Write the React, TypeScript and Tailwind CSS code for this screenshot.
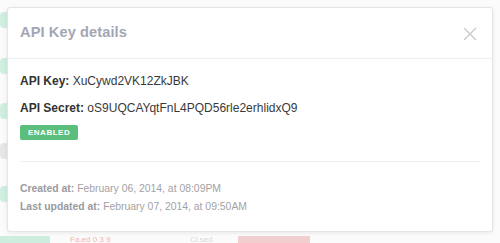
import React from "react";

export default function App() {
  const font = { fontFamily: '"Helvetica Neue", "Liberation Sans", Arial, sans-serif' };
  return (
    <div className="relative w-[500px] h-[243px] overflow-hidden bg-[#fbfbfc]" style={font}>
      {/* faded background page */}
      <div className="flex flex-col pt-[12px] gap-0">
        <div className="h-[16px] w-[30px] bg-[#cfeee0] rounded-sm" />
        <div className="h-[30px]" />
        <div className="h-[16px] w-[30px] bg-[#cfeee0] rounded-sm" />
        <div className="h-[29px]" />
        <div className="h-[16px] w-[30px] bg-[#cfeee0] rounded-sm" />
        <div className="h-[24px]" />
        <div className="h-[16px] w-[30px] bg-[#e6e6e8] rounded-sm" />
        <div className="h-[27px]" />
        <div className="h-[16px] w-[30px] bg-[#cfeee0] rounded-sm" />
        <div className="h-[34px]" />
        <div className="flex items-start h-[8px] gap-[20px]">
          <div className="h-[8px] w-[50px] bg-[#cdeedd]" />
          <div className="text-[8px] leading-[8px] text-[#f0b3b3] w-[100px]">Fa.ed 0 3 9</div>
          <div className="text-[8px] leading-[8px] text-[#d8d8d8] w-[28px]">Cl.sed</div>
          <div className="h-[8px] w-[72px] bg-[#f2cfcf]" />
        </div>
      </div>

      {/* modal */}
      <div className="absolute left-[7px] top-[7px] w-[486px] h-[225px] bg-white border border-[#e4e4ea] rounded-[3px] shadow-[0_1px_4px_rgba(0,0,0,0.08)] flex flex-col">
        <div className="h-[51px] flex items-center justify-between pl-[12px] pr-[15px] border-b border-[#eeeef2]">
          <div className="text-[14.6px] font-bold text-[#a3a6b4] tracking-[0.1px] -mt-[1px]">API Key details</div>
          <svg width="14" height="14" viewBox="0 0 14 14" className="mt-[1px]">
            <path d="M1 1 L13 13 M13 1 L1 13" stroke="#c9c9cf" strokeWidth="1.4" />
          </svg>
        </div>
        <div className="px-[12px] pt-[13px]">
          <div className="text-[12px] text-[#3a3a3a] leading-[18px]">
            <span className="font-bold text-[#333]">API Key:</span> XuCywd2VK12ZkJBK
          </div>
          <div className="text-[12px] text-[#3a3a3a] leading-[18px] mt-[9px]">
            <span className="font-bold text-[#333]">API Secret:</span> oS9UQCAYqtFnL4PQD56rle2erhlidxQ9
          </div>
          <div className="mt-[8px] inline-flex items-center h-[15px] px-[8px] bg-[#5cbe7c] rounded-[2px] text-white text-[8px] font-bold tracking-[0.5px]">
            ENABLED
          </div>
          <div className="mt-[19px] border-t border-[#f0f0f3]" />
          <div className="pt-[18px] text-[10.4px] text-[#a2a2a6] leading-[18px]">
            <div>
              <span className="font-bold text-[#9a9aa0]">Created at:</span> February 06, 2014, at 08:09PM
            </div>
            <div>
              <span className="font-bold text-[#9a9aa0]">Last updated at:</span> February 07, 2014, at 09:50AM
            </div>
          </div>
        </div>
      </div>
    </div>
  );
}
